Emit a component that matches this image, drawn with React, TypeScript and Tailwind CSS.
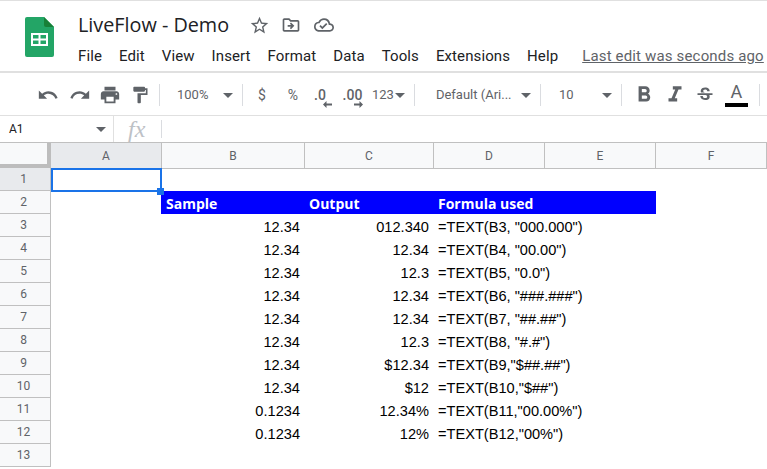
import {
  MdUndo,
  MdRedo,
  MdPrint,
  MdFormatPaint,
  MdFormatBold,
  MdFormatItalic,
  MdStrikethroughS,
  MdStarBorder,
  MdOutlineDriveFileMove,
  MdOutlineCloudDone,
} from "react-icons/md";

const menus = ["File", "Edit", "View", "Insert", "Format", "Data", "Tools", "Extensions", "Help"];

const rows = [
  ["12.34", "012.340", '=TEXT(B3, "000.000")'],
  ["12.34", "12.34", '=TEXT(B4, "00.00")'],
  ["12.34", "12.3", '=TEXT(B5, "0.0")'],
  ["12.34", "12.34", '=TEXT(B6, "###.###")'],
  ["12.34", "12.34", '=TEXT(B7, "##.##")'],
  ["12.34", "12.3", '=TEXT(B8, "#.#")'],
  ["12.34", "$12.34", '=TEXT(B9,"$##.##")'],
  ["12.34", "$12", '=TEXT(B10,"$##")'],
  ["0.1234", "12.34%", '=TEXT(B11,"00.00%")'],
  ["0.1234", "12%", '=TEXT(B12,"00%")'],
];

function Caret({ className = "" }: { className?: string }) {
  return <span className={"h-0 w-0 border-x-[5px] border-t-[5px] border-x-transparent border-t-[#5f6368] " + className} />;
}

function Divider() {
  return <div className="h-[22px] w-px shrink-0 bg-[#dadce0]" />;
}

function Arrow({ dir, className = "" }: { dir: "left" | "right"; className?: string }) {
  return (
    <svg width="9" height="7" viewBox="0 0 9 7" className={className} fill="#5f6368">
      {dir === "left" ? <path d="M0 3.500L3.500 0v2.500H9v2H3.500V7z" /> : <path d="M9 3.500L5.500 0v2.500H0v2h5.500V7z" />}
    </svg>
  );
}

function SheetsLogo() {
  return (
    <svg width="29" height="40" viewBox="0 0 29 40" className="shrink-0">
      <path d="M2 0h17l10 10v28a2 2 0 0 1-2 2H2a2 2 0 0 1-2-2V2a2 2 0 0 1 2-2z" fill="#23a566" />
      <path d="M19 0l10 10h-8a2 2 0 0 1-2-2z" fill="#188038" />
      <path d="M6 16h17v13H6z" fill="#fff" />
      <path d="M8 18h5.500v3.500H8zM15.500 18H21v3.500h-5.500zM8 23.500h5.500V27H8zM15.500 23.500H21V27h-5.500z" fill="#23a566" />
    </svg>
  );
}

function ColHead({ label, w, active }: { label: string; w: string; active?: boolean }) {
  return (
    <div className={`${w} flex h-full shrink-0 items-center justify-center border-r border-[#c0c0c0] text-[12px] text-[#5f6368] ${active ? "bg-[#e8eaed]" : ""}`}>
      {label}
    </div>
  );
}

function RowHead({ n, active }: { n: number; active?: boolean }) {
  return (
    <div className={`flex h-[23px] w-[51px] shrink-0 items-center justify-center border-r border-b border-[#c0c0c0] pr-[3px] text-[12px] text-[#5f6368] ${active ? "bg-[#e8eaed]" : "bg-[#f8f9fa]"}`}>
      {n}
    </div>
  );
}

export default function App() {
  return (
    <div className="h-[469px] w-[767px] overflow-hidden bg-white font-['Roboto',sans-serif]">
      {/* title bar */}
      <header className="flex h-[73px] items-start border-t border-b-2 border-[#e0e0e0] pl-[25px]">
        <div className="mt-[16px]">
          <SheetsLogo />
        </div>
        <div className="ml-[24px] mt-[10px] flex-1">
          <div className="flex items-center">
            <span className="font-['Open_Sans',sans-serif] text-[19.800px] leading-[28px] text-[#202124]">LiveFlow - Demo</span>
            <MdStarBorder className="ml-[20px] text-[21px] text-[#5f6368]" />
            <MdOutlineDriveFileMove className="ml-[11px] text-[20px] text-[#5f6368]" />
            <MdOutlineCloudDone className="ml-[13px] text-[20px] text-[#5f6368]" />
          </div>
          <nav className="mt-[7px] flex items-center text-[15px] leading-[20px] tracking-[0.1px] text-[#202124]">
            <div className="flex gap-[17px]">
              {menus.map((m) => (
                <span key={m}>{m}</span>
              ))}
            </div>
            <span className="ml-[24px] whitespace-nowrap tracking-[0.16px] text-[#5f6368] underline">Last edit was seconds ago</span>
          </nav>
        </div>
      </header>

      {/* toolbar */}
      <div className="flex h-[43px] items-center border-b border-[#e0e0e0] pl-[34px] pt-[2px] text-[#5f6368]">
        <MdUndo className="w-[28px] shrink-0 text-[22px]" />
        <MdRedo className="ml-[4px] w-[28px] shrink-0 text-[22px]" />
        <MdPrint className="ml-[2px] w-[28px] shrink-0 text-[22px]" />
        <MdFormatPaint className="ml-[2px] w-[28px] shrink-0 text-[20px]" />
        <div className="ml-[5px]"><Divider /></div>
        <span className="ml-[17px] w-[44px] text-[13px]">100%</span>
        <Caret className="ml-[2px]" />
        <div className="ml-[9px]"><Divider /></div>
        <span className="ml-[14px] w-[10px] text-center text-[14px]">$</span>
        <span className="ml-[20px] w-[12px] text-center text-[14px]">%</span>
        <span className="relative ml-[14px] w-[14px] text-center text-[14px] font-medium leading-[14px]">
          .0
          <Arrow dir="left" className="absolute left-[10px] top-[13px]" />
        </span>
        <span className="relative ml-[15px] w-[21px] text-center text-[14px] font-medium leading-[14px]">
          .00
          <Arrow dir="right" className="absolute left-[12px] top-[13px]" />
        </span>
        <span className="ml-[9px] text-[13px]">123</span>
        <Caret className="ml-[1px]" />
        <div className="ml-[9px]"><Divider /></div>
        <span className="ml-[21px] w-[84px] whitespace-nowrap text-[13px]">Default (Ari...</span>
        <Caret className="ml-[1px]" />
        <div className="ml-[9px]"><Divider /></div>
        <span className="ml-[18px] w-[45px] text-[13px]">10</span>
        <Caret className="ml-[-2px]" />
        <div className="ml-[9px]"><Divider /></div>
        <MdFormatBold className="ml-[9px] w-[26px] shrink-0 text-[26px]" />
        <MdFormatItalic className="ml-[5px] w-[26px] shrink-0 text-[26px]" />
        <MdStrikethroughS className="ml-[5px] w-[24px] shrink-0 text-[20px]" />
        <div className="ml-[8px] flex w-[23px] shrink-0 flex-col items-center">
          <span className="text-[18px] leading-[18px]">A</span>
          <span className="mt-[2px] h-[4px] w-[23px] bg-black" />
        </div>
        <div className="ml-[11px]"><Divider /></div>
      </div>

      {/* formula bar */}
      <div className="flex h-[27px] items-center border-b border-[#c0c0c0]">
        <div className="flex h-full w-[114px] items-center border-r border-[#e0e0e0] pl-[9px] text-[12px] text-[#202124]">
          A1
          <Caret className="ml-[72px]" />
        </div>
        <span className="ml-[14px] w-[33px] font-['Liberation_Serif',serif] text-[24px] italic leading-none text-[#bdc1c6]">fx</span>
        <div className="h-[18px] w-px bg-[#dadce0]" />
      </div>

      {/* column headers */}
      <div className="flex h-[26px] border-b border-[#c0c0c0] bg-[#f8f9fa]">
        <div className="h-full w-[51px] shrink-0 border-r-[4px] border-b-[4px] border-[#bdbdbd]" />
        <ColHead label="A" w="w-[111px]" active />
        <ColHead label="B" w="w-[143px]" />
        <ColHead label="C" w="w-[129px]" />
        <ColHead label="D" w="w-[111px]" />
        <ColHead label="E" w="w-[111px]" />
        <ColHead label="F" w="w-[111px]" />
      </div>

      {/* sheet body */}
      <div className="relative mt-[-1px]">
        <div className="flex">
          <RowHead n={1} active />
          <div className="relative h-[23px] w-[111px]">
            <div className="absolute left-0 top-0 h-[24px] w-[111px] border-2 border-[#1a73e8]" />
            <div className="absolute right-[-2px] top-[20px] z-10 h-[7px] w-[7px] bg-[#1a73e8]" />
          </div>
        </div>
        <div className="flex">
          <RowHead n={2} />
          <div className="w-[110px] shrink-0" />
          <div className="flex h-[23px] w-[495px] items-center bg-[#0000ff] pt-[1px] font-['Open_Sans',sans-serif] text-[14px] font-bold text-white">
            <span className="w-[143px] pl-[5px]">Sample</span>
            <span className="w-[129px] pl-[5px]">Output</span>
            <span className="pl-[5px]">Formula used</span>
          </div>
        </div>
        {rows.map((r, i) => (
          <div key={i} className="flex">
            <RowHead n={i + 3} />
            <div className="w-[110px] shrink-0" />
            <div className="flex h-[23px] items-center pt-[4px] font-['Liberation_Sans',sans-serif] text-[14.600px] text-black">
              <span className="w-[143px] pr-[4px] text-right">{r[0]}</span>
              <span className="w-[129px] pr-[4px] text-right">{r[1]}</span>
              <span className="whitespace-nowrap pl-[5px]">{r[2]}</span>
            </div>
          </div>
        ))}
        <RowHead n={13} />
      </div>
    </div>
  );
}
